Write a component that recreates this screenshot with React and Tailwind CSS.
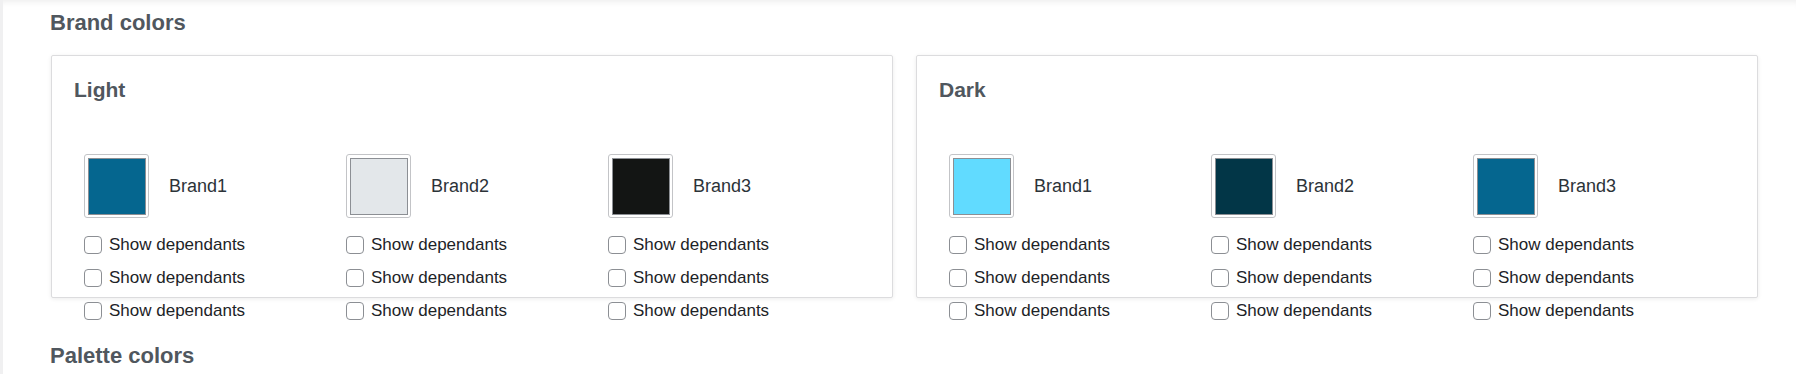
const themes = [
  {
    name: "Light",
    brands: [
      { label: "Brand1", color: "#05668f" },
      { label: "Brand2", color: "#e3e7ea" },
      { label: "Brand3", color: "#131514" },
    ],
  },
  {
    name: "Dark",
    brands: [
      { label: "Brand1", color: "#61dbff" },
      { label: "Brand2", color: "#023647" },
      { label: "Brand3", color: "#05668f" },
    ],
  },
];

function Swatch({ color }) {
  return (
    <div className="w-[65px] h-[64px] shrink-0 rounded-[3px] border-[1.5px] border-[#c3c4c7] bg-white p-[2.5px]">
      <div
        className="w-full h-full border border-[#8c8f94]"
        style={{ backgroundColor: color }}
      ></div>
    </div>
  );
}

function Dependant() {
  return (
    <label className="flex items-center gap-[7px] h-[33px]">
      <span className="w-[18px] h-[18px] rounded-[4px] border-[1.5px] border-[#8c8f94] bg-white"></span>
      <span className="text-[17px] text-[#1d2327]">Show dependants</span>
    </label>
  );
}

function BrandItem({ brand }) {
  return (
    <div className="w-[262px]">
      <div className="flex items-center gap-5">
        <Swatch color={brand.color} />
        <span className="text-[18px] text-[#2c3338]">{brand.label}</span>
      </div>
      <div className="mt-[10px]">
        <Dependant />
        <Dependant />
        <Dependant />
      </div>
    </div>
  );
}

function ThemeCard({ theme }) {
  return (
    <div className="w-[842px] h-[243px] bg-white border border-[#dcdcde] rounded-[2px] shadow-[0_1px_4px_rgba(0,0,0,0.08)] pt-5 pl-[22px]">
      <h3 className="text-[21px] leading-7 font-bold text-[#50575e]">
        {theme.name}
      </h3>
      <div className="flex mt-[50px] pl-[10px]">
        {theme.brands.map((b) => (
          <BrandItem key={b.label} brand={b} />
        ))}
      </div>
    </div>
  );
}

export default function App() {
  return (
    <div
      className="w-[1796px] h-[374px] bg-[#f0f0f1] overflow-hidden"
      style={{ fontFamily: '"Liberation Sans", Arial, sans-serif' }}
    >
      <div className="ml-[3px] h-full bg-white shadow-[inset_0_7px_6px_-5px_rgba(0,0,0,0.07)] pl-[47px] pt-[9px]">
        <h2 className="text-[22px] leading-7 font-bold text-[#50575e]">
          Brand colors
        </h2>
        <div className="flex gap-[23px] mt-[18px] ml-px">
          {themes.map((t) => (
            <ThemeCard key={t.name} theme={t} />
          ))}
        </div>
        <h2 className="mt-[44px] text-[22px] leading-7 font-bold text-[#50575e]">
          Palette colors
        </h2>
      </div>
    </div>
  );
}
